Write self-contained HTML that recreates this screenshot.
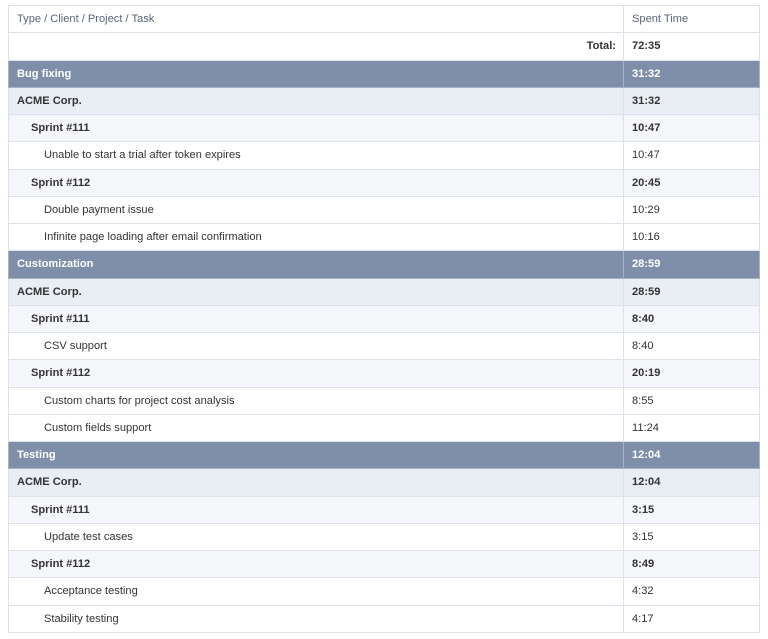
<!DOCTYPE html><html><head><style>
body{margin:0;background:#fff;font-family:"Liberation Sans",sans-serif;font-size:11.1px;color:#333}
.t{position:absolute;left:8px;top:5px;width:752px;border-collapse:collapse;table-layout:fixed}
td{height:27.26px;box-sizing:border-box;border:1px solid #dde2ea;padding:0 0 0 8px;white-space:nowrap;line-height:14px}
td:first-child{width:615px}
.h td{color:#58657a}
.tot td{font-weight:bold}
.tot td:first-child{text-align:right;padding-right:7px}
.g td{background:#7f8fa9;color:#fff;font-weight:bold;border-color:#a8b3c5}
.c td{background:#e9edf4;font-weight:bold}
.s td{background:#f4f6f9;font-weight:bold}
.s td:first-child{padding-left:22px}
.k td:first-child{padding-left:35px}
</style></head><body>
<table class="t">
<tr class="h"><td>Type / Client / Project / Task</td><td>Spent Time</td></tr>
<tr class="tot"><td>Total:</td><td>72:35</td></tr>
<tr class="g"><td>Bug fixing</td><td>31:32</td></tr>
<tr class="c"><td>ACME Corp.</td><td>31:32</td></tr>
<tr class="s"><td>Sprint #111</td><td>10:47</td></tr>
<tr class="k"><td>Unable to start a trial after token expires</td><td>10:47</td></tr>
<tr class="s"><td>Sprint #112</td><td>20:45</td></tr>
<tr class="k"><td>Double payment issue</td><td>10:29</td></tr>
<tr class="k"><td>Infinite page loading after email confirmation</td><td>10:16</td></tr>
<tr class="g"><td>Customization</td><td>28:59</td></tr>
<tr class="c"><td>ACME Corp.</td><td>28:59</td></tr>
<tr class="s"><td>Sprint #111</td><td>8:40</td></tr>
<tr class="k"><td>CSV support</td><td>8:40</td></tr>
<tr class="s"><td>Sprint #112</td><td>20:19</td></tr>
<tr class="k"><td>Custom charts for project cost analysis</td><td>8:55</td></tr>
<tr class="k"><td>Custom fields support</td><td>11:24</td></tr>
<tr class="g"><td>Testing</td><td>12:04</td></tr>
<tr class="c"><td>ACME Corp.</td><td>12:04</td></tr>
<tr class="s"><td>Sprint #111</td><td>3:15</td></tr>
<tr class="k"><td>Update test cases</td><td>3:15</td></tr>
<tr class="s"><td>Sprint #112</td><td>8:49</td></tr>
<tr class="k"><td>Acceptance testing</td><td>4:32</td></tr>
<tr class="k"><td>Stability testing</td><td>4:17</td></tr>
</table>
</body></html>
